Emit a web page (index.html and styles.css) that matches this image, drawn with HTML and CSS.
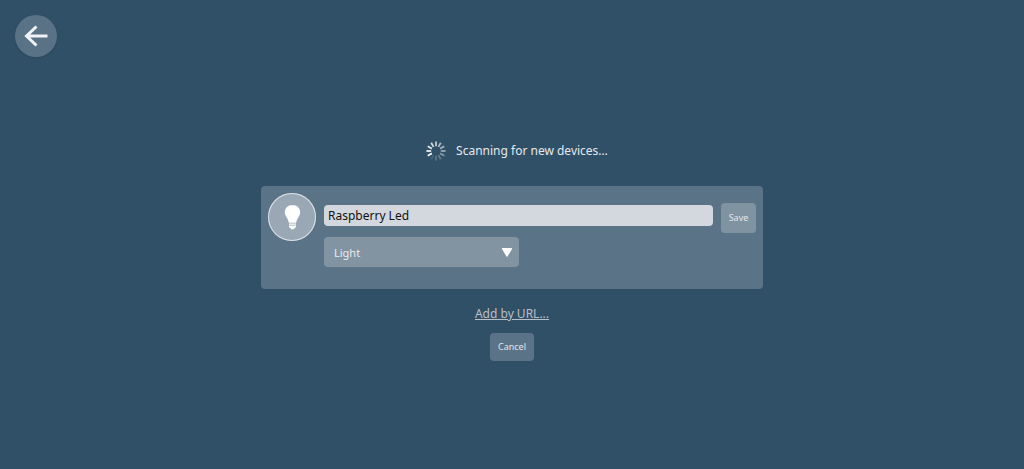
FILE: index.html
```
<!DOCTYPE html>
<html lang="en">
<head>
    <meta charset="utf-8">
    <title>Add Devices</title>
    <link rel="stylesheet" href="styles.css">
</head>
<body>
    <button id="back-button" class="back-button" type="button" aria-label="Back">
        <svg viewBox="0 0 42 42" width="42" height="42">
            <path d="M12 21H32.500M21.500 11.500L11.500 21L21.500 30.500" fill="none" stroke="#f0f2f8" stroke-width="3"/>
        </svg>
    </button>

    <main class="add-things">
        <div class="scanning">
            <svg class="spinner" viewBox="-10 -10 20 20" width="20" height="20">
                <g stroke="#fff" stroke-width="1.800">
                    <path d="M0-4.800V-9.600" opacity=".7"/>
                    <path d="M0-4.800V-9.600" opacity=".6" transform="rotate(30)"/>
                    <path d="M0-4.800V-9.600" opacity=".55" transform="rotate(60)"/>
                    <path d="M0-4.800V-9.600" opacity=".5" transform="rotate(90)"/>
                    <path d="M0-4.800V-9.600" opacity=".4" transform="rotate(120)"/>
                    <path d="M0-4.800V-9.600" opacity=".25" transform="rotate(150)"/>
                    <path d="M0-4.800V-9.600" opacity=".2" transform="rotate(180)"/>
                    <path d="M0-4.800V-9.600" opacity=".1" transform="rotate(210)"/>
                    <path d="M0-4.800V-9.600" opacity=".95" transform="rotate(240)"/>
                    <path d="M0-4.800V-9.600" opacity=".9" transform="rotate(270)"/>
                    <path d="M0-4.800V-9.600" opacity=".85" transform="rotate(300)"/>
                    <path d="M0-4.800V-9.600" opacity=".8" transform="rotate(330)"/>
                </g>
            </svg>
            <span class="scanning-label">Scanning for new devices…</span>
        </div>

        <form class="new-thing">
            <div class="thing-icon">
                <svg viewBox="0 0 48 48" width="48" height="48">
                    <path d="M24.500 12c-4.500 0-7.700 3.200-7.700 7.400 0 3.600 3.500 5.800 4 10.300h7.400c.5-4.500 4-6.700 4-10.300 0-4.200-3.200-7.400-7.700-7.400z" fill="#fff"/>
                    <path d="M21 30.400h7v1.400h-7zM21 32.500h7v1.200q0 1-1.500 1.400l-.5 1.200h-3l-.5-1.200q-1.500-.4-1.500-1.400z" fill="#fff"/>
                </svg>
            </div>
            <div class="fields">
                <input type="text" id="thing-name" class="thing-name" value="Raspberry Led" aria-label="Name">
                <select id="thing-type" class="thing-type" aria-label="Type">
                    <option>Light</option>
                </select>
            </div>
            <button class="text-button save-button" type="button">Save</button>
        </form>

        <a href="#" class="add-by-url">Add by URL...</a>
        <button class="text-button cancel-button" type="button">Cancel</button>
    </main>
</body>
</html>
```
FILE: styles.css
```
body {
    margin: 0;
    min-height: 100vh;
    background: #305067;
    color: #e4e9ed;
    font-family: "Noto Sans", "Open Sans", sans-serif;
    font-size: 12px;
}
button, input, select {
    font-family: inherit;
    border: none;
    margin: 0;
    box-sizing: border-box;
}
.back-button {
    position: absolute;
    top: 15px;
    left: 15px;
    width: 42px;
    height: 42px;
    padding: 0;
    border-radius: 50%;
    background: #597286;
    box-shadow: 0 1px 3px rgba(0, 0, 0, 0.1);
    cursor: pointer;
}
.back-button svg, .thing-icon svg {
    display: block;
}
.add-things {
    display: flex;
    flex-direction: column;
    align-items: center;
    padding: 141px 16px 16px;
}
.scanning {
    display: flex;
    align-items: center;
    gap: 10px;
    height: 20px;
    padding-left: 10px;
    margin-bottom: 25px;
}
.scanning-label {
    padding-bottom: 2px;
}
.new-thing {
    display: flex;
    align-items: flex-start;
    box-sizing: border-box;
    width: 100%;
    max-width: 502px;
    padding: 7px 7px 22px;
    border-radius: 4px;
    background: #5b7387;
}
.thing-icon {
    box-sizing: border-box;
    width: 48px;
    height: 48px;
    border-radius: 50%;
    background: #9aa8b5;
    box-shadow: inset 0 0 0 1px #dce1e6;
}
.fields {
    flex: 1;
    min-width: 0;
    padding-top: 12px;
    margin: 0 8px;
}
.thing-name {
    display: block;
    width: 100%;
    height: 21px;
    padding: 0 4px;
    border-radius: 4px;
    background: #d3d8de;
    color: #111;
    font-size: 12px;
}
.thing-type {
    display: block;
    width: 50%;
    height: 30px;
    margin-top: 11px;
    padding: 0 10px;
    border-radius: 4px;
    appearance: none;
    background: #8294a2 url("data:image/svg+xml,%3Csvg xmlns='http://www.w3.org/2000/svg' width='12' height='9'%3E%3Cpath d='M1.500 0h9q1 0 .5 1L6.500 8.500q-.5.5-1 0L1 1Q.5 0 1.500 0z' fill='white'/%3E%3C/svg%3E") no-repeat right 6px center;
    color: #e8ecef;
    font-size: 11px;
}
.text-button {
    padding: 0 0 2px;
    border-radius: 4px;
    color: #e1e6ea;
    font-size: 9px;
    cursor: pointer;
}
.save-button {
    width: 35px;
    height: 30px;
    margin-top: 10px;
    background: #8093a1;
}
.cancel-button {
    width: 44px;
    height: 28px;
    background: #5b7387;
}
.add-by-url {
    margin: 17px 0 11px;
    color: #b9bfc6;
    line-height: 16px;
}
```
